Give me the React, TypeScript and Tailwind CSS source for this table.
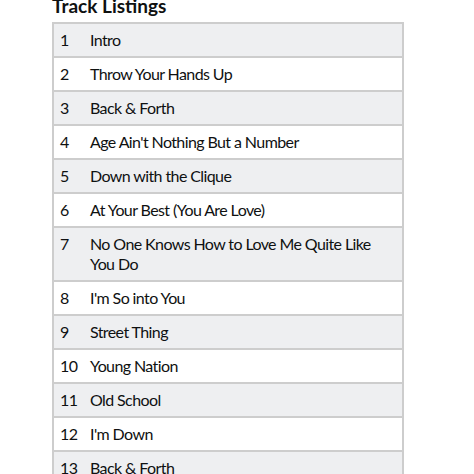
const tracks = [
  'Intro',
  'Throw Your Hands Up',
  'Back & Forth',
  "Age Ain't Nothing But a Number",
  'Down with the Clique',
  'At Your Best (You Are Love)',
  'No One Knows How to Love Me Quite Like You Do',
  "I'm So into You",
  'Street Thing',
  'Young Nation',
  'Old School',
  "I'm Down",
  'Back & Forth',
]

export default function App() {
  return (
    <div className="h-[474px] w-[474px] overflow-hidden bg-white pl-[52px] font-['Lato',sans-serif] text-[#0f1111]">
      <h2 className="-mt-[8px] h-[30px] text-[19px] leading-[28px] font-bold">Track Listings</h2>
      <div className="w-[352px] border-2 border-b-0 border-[#cdcdcd]">
        {tracks.map((title, i) => (
          <div
            key={i}
            className={`flex border-b-2 border-[#cdcdcd] px-[6px] py-[6px] text-[16px] leading-[20px] tracking-[-0.6px] ${
              i % 2 === 0 ? 'bg-[#eeeff1]' : 'bg-white'
            }`}
          >
            <span className="w-[30px] shrink-0">{i + 1}</span>
            <span className="pr-[8px]">{title}</span>
          </div>
        ))}
      </div>
    </div>
  )
}
